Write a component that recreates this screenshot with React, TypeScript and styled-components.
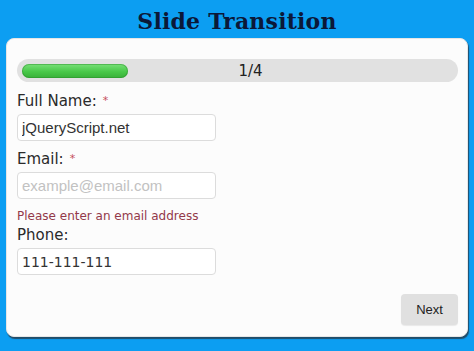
import React from "react";
import styled, { createGlobalStyle } from "styled-components";

const GlobalStyle = createGlobalStyle`
  html, body {
    margin: 0;
    padding: 0;
    background: #0c9ef2;
  }
  body {
    width: 474px;
    height: 351px;
    overflow: hidden;
  }
`;

const Page = styled.div`
  display: flex;
  flex-direction: column;
  align-items: stretch;
  height: 351px;
  padding: 0 6px;
  box-sizing: border-box;
`;

const Title = styled.h1`
  margin: 0;
  height: 38px;
  padding-top: 4px;
  box-sizing: border-box;
  display: flex;
  align-items: center;
  justify-content: center;
  font-family: "DejaVu Serif", "Liberation Serif", serif;
  font-weight: bold;
  font-size: 22px;
  color: #0b1838;
  letter-spacing: 0.2px;
`;

const Card = styled.form`
  height: 299px;
  box-sizing: border-box;
  background: #fcfcfc;
  border: 1px solid #e6e6e6;
  border-radius: 8px;
  box-shadow: 1px 2px 1px rgba(40, 50, 60, 0.75);
  padding: 20px 9px 11px 10px;
  display: flex;
  flex-direction: column;
  font-family: "DejaVu Sans", Verdana, sans-serif;
`;

const Progress = styled.div`
  position: relative;
  height: 23px;
  border-radius: 12px;
  background: #e1e1e1;
  display: flex;
  align-items: center;
  justify-content: center;
  padding-left: 26px;
  box-sizing: border-box;
  font-size: 15px;
  color: #222;
`;

const ProgressFill = styled.div`
  position: absolute;
  left: 5px;
  top: 5px;
  height: 14px;
  border-radius: 7px;
  background: linear-gradient(#78e078, #48c848 55%, #38b038);
  box-shadow: inset 0 0 0 1px rgba(40, 140, 40, 0.45);
`;

const Label = styled.label<{ $gap: number }>`
  display: block;
  margin-top: ${(p) => p.$gap}px;
  font-size: 15px;
  line-height: 18px;
  color: #2a2a2a;
`;

const Required = styled.span`
  color: #c44c58;
  font-size: 11px;
  margin-left: 6px;
  vertical-align: 2px;
`;

const Input = styled.input<{ $mono?: boolean }>`
  display: block;
  margin-top: 4px;
  width: 199px;
  height: 27px;
  box-sizing: border-box;
  border: 1px solid #dcdcdc;
  border-radius: 4px;
  background: #fff;
  padding: 0 4px;
  font-family: ${(p) =>
    p.$mono ? `"DejaVu Sans", Verdana, sans-serif` : `"Liberation Sans", Arial, sans-serif`};
  font-size: ${(p) => (p.$mono ? "14px" : "15px")};
  color: #333;
  outline: none;

  &::placeholder {
    color: #c2c2c2;
  }
`;

const ErrorText = styled.div`
  margin-top: 10px;
  font-size: 12px;
  line-height: 15px;
  color: #93394a;
`;

const Footer = styled.div`
  margin-top: auto;
  display: flex;
  justify-content: flex-end;
`;

const NextButton = styled.button`
  width: 57px;
  height: 31px;
  border: none;
  border-radius: 4px;
  background: #e0e0e0;
  box-shadow: 0 1px 1px rgba(0, 0, 0, 0.08);
  font-family: "Liberation Sans", Arial, sans-serif;
  font-size: 13px;
  color: #222;
  cursor: pointer;
`;

export default function App() {
  const step = 1;
  const total = 4;
  return (
    <>
      <GlobalStyle />
      <Page>
        <Title>Slide Transition</Title>
        <Card onSubmit={(e) => e.preventDefault()}>
          <Progress>
            <ProgressFill style={{ width: `${(step / total) * 100 - 1}%` }} />
            {step}/{total}
          </Progress>
          <Label $gap={10}>
            Full Name:<Required>*</Required>
          </Label>
          <Input defaultValue="jQueryScript.net" />
          <Label $gap={9}>
            Email:<Required>*</Required>
          </Label>
          <Input placeholder="example@email.com" />
          <ErrorText>Please enter an email address</ErrorText>
          <Label $gap={2}>Phone:</Label>
          <Input $mono defaultValue="111-111-111" />
          <Footer>
            <NextButton type="button">Next</NextButton>
          </Footer>
        </Card>
      </Page>
    </>
  );
}
